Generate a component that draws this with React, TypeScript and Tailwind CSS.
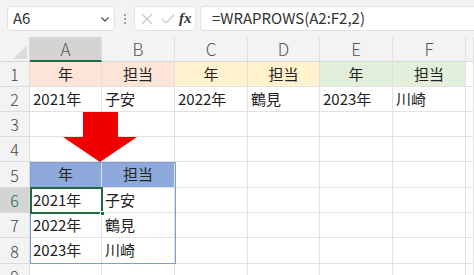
import * as React from 'react'

const FONT = { fontFamily: '"Noto Sans CJK JP", "Noto Sans", sans-serif' }

const COLS = ['A', 'B', 'C', 'D', 'E', 'F', '']

type Cell = { text?: string; bg?: string; center?: boolean }

const rows: Cell[][] = [
  [
    { text: '年', bg: 'bg-[#fce4d6]', center: true },
    { text: '担当', bg: 'bg-[#fce4d6]', center: true },
    { text: '年', bg: 'bg-[#fff2cc]', center: true },
    { text: '担当', bg: 'bg-[#fff2cc]', center: true },
    { text: '年', bg: 'bg-[#e2efda]', center: true },
    { text: '担当', bg: 'bg-[#e2efda]', center: true },
    {},
  ],
  [{ text: '2021年' }, { text: '子安' }, { text: '2022年' }, { text: '鶴見' }, { text: '2023年' }, { text: '川崎' }, {}],
  [{}, {}, {}, {}, {}, {}, {}],
  [{}, {}, {}, {}, {}, {}, {}],
  [
    { text: '年', bg: 'bg-[#8ea9db]', center: true },
    { text: '担当', bg: 'bg-[#8ea9db]', center: true },
    {}, {}, {}, {}, {},
  ],
  [{ text: '2021年' }, { text: '子安' }, {}, {}, {}, {}, {}],
  [{ text: '2022年' }, { text: '鶴見' }, {}, {}, {}, {}, {}],
  [{ text: '2023年' }, { text: '川崎' }, {}, {}, {}, {}, {}],
  [{}, {}, {}, {}, {}, {}, {}],
]

function Toolbar() {
  return (
    <div className="flex h-[37px] items-center bg-[#f3f3f3] pl-[7px]">
      <div className="flex h-[25px] w-[108px] items-center justify-between rounded-[4px] border border-[#e3e3e3] bg-white pl-[5px] pr-[4px]">
        <span className="text-[15px] text-[#333]">A6</span>
        <svg width="10" height="8" viewBox="0 0 10 8">
          <path d="M1.5 2.5 L5 6 L8.5 2.5" fill="none" stroke="#555" strokeWidth="1.3" />
        </svg>
      </div>
      <div className="flex w-[19px] flex-col items-center gap-[2px]">
        <span className="h-[2px] w-[2px] rounded-full bg-[#888]" />
        <span className="h-[2px] w-[2px] rounded-full bg-[#888]" />
        <span className="h-[2px] w-[2px] rounded-full bg-[#888]" />
      </div>
      <div className="flex h-[25px] w-[62px] items-center rounded-[4px] border border-[#e3e3e3] bg-white pl-[5px]">
        <svg width="14" height="14" viewBox="0 0 14 14">
          <path d="M2 2 L12 12 M12 2 L2 12" stroke="#c8c8c8" strokeWidth="1.2" />
        </svg>
        <svg width="16" height="14" viewBox="0 0 16 14" className="ml-[6px]">
          <path d="M2 7 L6 11 L14 3" fill="none" stroke="#c8c8c8" strokeWidth="1.2" />
        </svg>
        <span
          className="ml-[3px] text-[15px] font-bold italic text-[#333]"
          style={{ fontFamily: '"Liberation Serif", serif' }}
        >
          fx
        </span>
      </div>
      <div className="ml-[4px] flex h-[25px] flex-1 items-center rounded-l-[4px] border border-r-0 border-[#e3e3e3] bg-white pl-[11px]">
        <span className="text-[15px] text-[#333]">=WRAPROWS(A2:F2,2)</span>
      </div>
    </div>
  )
}

export default function App() {
  return (
    <div className="relative h-[275px] w-[474px] overflow-hidden bg-white" style={FONT}>
      <Toolbar />
      <div className="grid grid-cols-[30px_72px_73px_73px_72px_73px_73px_1fr] grid-rows-[25px_25px_25px_25px_25px_26px_25px_25px_26px_25px]">
        {/* corner */}
        <div className="relative border-r border-b border-[#d8d8d8] bg-[#f3f3f3]">
          <svg className="absolute right-[2px] bottom-[2px]" width="14" height="14" viewBox="0 0 14 14">
            <path d="M14 0 L14 14 L0 14 Z" fill="#dcdcdc" />
          </svg>
        </div>
        {COLS.map((c, i) => (
          <div
            key={'h' + i}
            className={
              'flex items-center justify-center border-r border-[#e0e0e0] text-[17px] font-light text-[#555] ' +
              (c === 'A'
                ? 'border-b-2 border-b-[#1e6b41] bg-[#d4d4d4]'
                : 'border-b border-b-[#d8d8d8] bg-[#f3f3f3]')
            }
          >
            {c}
          </div>
        ))}
        {rows.map((row, r) => (
          <React.Fragment key={r}>
            <div
              className={
                'flex items-center justify-center border-r border-b border-[#dcdcdc] text-[16px] font-light ' +
                (r === 5 ? 'bg-[#d4d4d4] text-[#1e6b41]' : 'bg-[#f3f3f3] text-[#444]')
              }
            >
              {r + 1}
            </div>
            {row.map((cell, c) => (
              <div
                key={c}
                className={
                  'flex items-center overflow-hidden whitespace-nowrap border-r border-b border-[#e1e1e1] text-[15px] text-[#222] ' +
                  (cell.bg ?? 'bg-white') +
                  (cell.center ? ' justify-center' : ' pl-[3px]')
                }
              >
                {cell.text}
              </div>
            ))}
          </React.Fragment>
        ))}
      </div>

      {/* selection range A5:B8 */}
      <div className="pointer-events-none absolute left-[30px] top-[162px] h-[102px] w-[146px] border border-[#7f9dcf]" />
      {/* active cell A6 */}
      <div className="pointer-events-none absolute left-[30px] top-[187px] h-[27px] w-[73px] border-2 border-[#1e6b41]" />
      <div className="pointer-events-none absolute left-[100px] top-[211px] h-[5px] w-[5px] border border-white bg-[#1e6b41]" />

      {/* red arrow */}
      <svg className="pointer-events-none absolute left-[62px] top-[112px]" width="76" height="51" viewBox="0 0 76 51">
        <path d="M21 0 L56 0 L56 25 L75 25 L38 50 L1 25 L21 25 Z" fill="#f20000" />
      </svg>
    </div>
  )
}
